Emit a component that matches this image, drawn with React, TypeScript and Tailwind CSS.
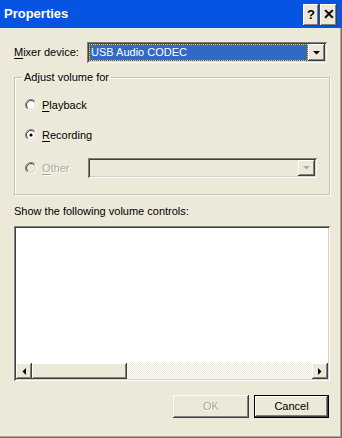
import React, { useId } from 'react';

const raised =
  'shadow-[inset_-1px_-1px_0_#404040,inset_1px_1px_0_#fff,inset_-2px_-2px_0_#808080,inset_2px_2px_0_#ECE9D8]';
const sunken =
  'shadow-[inset_1px_1px_0_#808080,inset_-1px_-1px_0_#fff,inset_2px_2px_0_#404040,inset_-2px_-2px_0_#D4D0C8]';

const Radio: React.FC<{ checked?: boolean; disabled?: boolean }> = ({ checked, disabled }) => {
  const id = useId().replace(/:/g, '');
  return (
    <svg width="12" height="12" viewBox="0 0 12 12" className="shrink-0">
      <defs>
        <linearGradient id={`o${id}`} x1="0" y1="0" x2="1" y2="1">
          <stop offset="0.45" stopColor="#808080" />
          <stop offset="0.55" stopColor="#ffffff" />
        </linearGradient>
        <linearGradient id={`i${id}`} x1="0" y1="0" x2="1" y2="1">
          <stop offset="0.45" stopColor="#404040" />
          <stop offset="0.55" stopColor="#D4D0C8" />
        </linearGradient>
      </defs>
      <circle cx="6" cy="6" r="5.5" fill="none" stroke={`url(#o${id})`} strokeWidth="1" />
      <circle cx="6" cy="6" r="4.5" fill={disabled ? '#ECE9D8' : '#fff'} stroke={`url(#i${id})`} strokeWidth="1" />
      {checked && <circle cx="6" cy="6" r="1.6" fill="#000" />}
    </svg>
  );
};

const Arrow: React.FC<{ dir: 'down' | 'left' | 'right'; color?: string }> = ({ dir, color = '#000' }) => {
  const pts =
    dir === 'down' ? '0,0 7,0 3.5,3.5' : dir === 'left' ? '4,0 4,7 0.5,3.5' : '0,0 0,7 3.5,3.5';
  const w = dir === 'down' ? 7 : 4;
  const h = dir === 'down' ? 4 : 7;
  return (
    <svg width={w} height={h} viewBox={`0 0 ${w} ${h}`}>
      <polygon points={pts} fill={color} />
    </svg>
  );
};

export default function App() {
  return (
    <div className="w-[342px] h-[438px] flex flex-col font-['Liberation_Sans',Arial,sans-serif] text-[11px] leading-[13px] text-black select-none">
      {/* title bar */}
      <div className="h-[28px] bg-[#0854E2] flex items-center pl-[4px] pr-[5px] shrink-0">
        <span className="text-white font-bold text-[13px] leading-[16px]">Properties</span>
        <div className="ml-auto flex gap-[1px] mt-[1px]">
          <div className={`w-[16px] h-[22px] bg-[#ECE9D8] ${raised} flex items-center justify-center font-bold text-[13px]`}>?</div>
          <div className={`w-[17px] h-[22px] bg-[#ECE9D8] ${raised} flex items-center justify-center font-bold text-[14px]`}>✕</div>
        </div>
      </div>

      {/* body */}
      <div className="flex-1 bg-[#ECE9D8] pl-[14px] shadow-[inset_-1px_-1px_0_#716F64,inset_-2px_-2px_0_#ACA899] flex flex-col">
        {/* mixer device */}
        <div className="flex items-center mt-[14px] h-[21px]">
          <span className="w-[73px]">
            <span className="underline underline-offset-2">M</span>ixer device:
          </span>
          <div className={`w-[240px] h-[21px] bg-white ${sunken} p-[2px] flex`}>
            <div className="flex-1 bg-[#316AC5] outline-1 outline-dotted outline-[#F7D24B] -outline-offset-1 text-white px-[2px] flex items-center">
              USB Audio CODEC
            </div>
            <div className={`w-[17px] bg-[#ECE9D8] ${raised} flex items-center justify-center`}>
              <Arrow dir="down" />
            </div>
          </div>
        </div>

        {/* adjust volume group */}
        <fieldset className="mt-[8px] w-[316px] border border-[#C5C2B2] shadow-[1px_1px_0_#fff,inset_1px_1px_0_#fff] px-[10px] pt-[13px] pb-[16px]">
          <legend className="ml-[-3px] px-[2px]">Adjust volume for</legend>
          <div className="flex items-center h-[16px] gap-[5px]">
            <Radio />
            <span>
              <span className="underline underline-offset-2">P</span>layback
            </span>
          </div>
          <div className="flex items-center h-[16px] gap-[5px] mt-[14px]">
            <Radio checked />
            <span>
              <span className="underline underline-offset-2">R</span>ecording
            </span>
          </div>
          <div className="flex items-center h-[20px] mt-[15px]">
            <div className="flex items-center gap-[5px] w-[63px] text-[#ACA899]">
              <Radio disabled />
              <span className="[text-shadow:1px_1px_0_#fff]">
                <span className="underline underline-offset-2">O</span>ther
              </span>
            </div>
            <div className={`w-[229px] h-[20px] bg-[#ECE9D8] ${sunken} p-[2px] flex justify-end`}>
              <div className={`w-[17px] bg-[#ECE9D8] ${raised} flex items-center justify-center`}>
                <Arrow dir="down" color="#ACA899" />
              </div>
            </div>
          </div>
        </fieldset>

        <div className="mt-[10px]">Show the following volume controls:</div>

        {/* list box */}
        <div className={`mt-[8px] w-[316px] h-[155px] bg-white ${sunken} p-[2px] flex flex-col`}>
          <div className="flex-1" />
          <div className="h-[16px] flex">
            <div className={`w-[16px] bg-[#ECE9D8] ${raised} flex items-center justify-center`}>
              <Arrow dir="left" />
            </div>
            <div className={`w-[95px] bg-[#ECE9D8] ${raised}`} />
            <div className="flex-1 bg-[conic-gradient(#fff_25%,#ECE9D8_0_50%,#fff_0_75%,#ECE9D8_0)] bg-[length:2px_2px]" />
            <div className={`w-[16px] bg-[#ECE9D8] ${raised} flex items-center justify-center`}>
              <Arrow dir="right" />
            </div>
          </div>
        </div>

        {/* buttons */}
        <div className="mt-[14px] w-[315px] flex justify-end gap-[5px]">
          <div className={`w-[76px] h-[23px] bg-[#ECE9D8] ${raised} flex items-center justify-center text-[#ACA899] [text-shadow:1px_1px_0_#fff]`}>
            OK
          </div>
          <div className="w-[75px] h-[23px] border border-black">
            <div className={`w-full h-full bg-[#ECE9D8] ${raised} flex items-center justify-center`}>Cancel</div>
          </div>
        </div>
      </div>
    </div>
  );
}
